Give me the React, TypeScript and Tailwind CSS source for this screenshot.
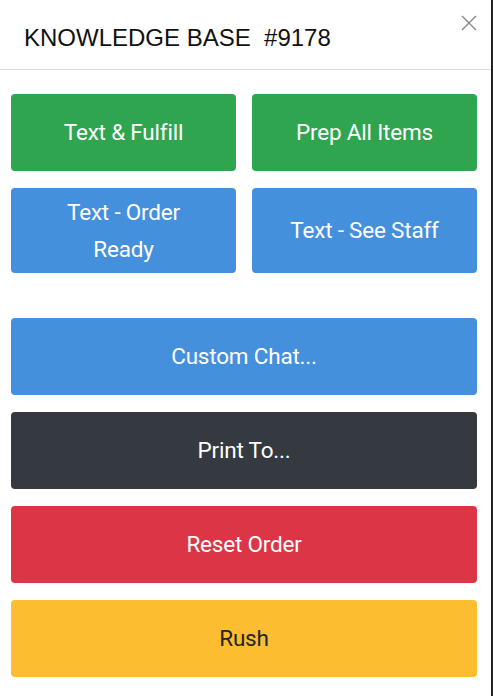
import React from 'react'

type Btn = { label: string; className: string }

const PAIRS: Btn[][] = [
  [
    { label: 'Text & Fulfill', className: 'bg-[#2fa54f] text-white' },
    { label: 'Prep All Items', className: 'bg-[#2fa54f] text-white' },
  ],
  [
    { label: 'Text - Order Ready', className: 'bg-[#4590dd] text-white' },
    { label: 'Text - See Staff', className: 'bg-[#4590dd] text-white' },
  ],
]

const WIDE: Btn[] = [
  { label: 'Print To...', className: 'bg-[#343a40] text-white' },
  { label: 'Reset Order', className: 'bg-[#dc3545] text-white' },
  { label: 'Rush', className: 'bg-[#fcbd30] text-[#212529]' },
]

function ActionButton({ label, className }: Btn) {
  return (
    <button
      className={`flex min-h-[77px] w-full items-center justify-center rounded-[4px] px-7 py-[5.5px] text-center text-[22.5px] leading-[37px] tracking-[-0.2px] ${className}`}
    >
      {label}
    </button>
  )
}

export default function App() {
  return (
    <div
      className="h-[696px] w-[493px] border-r-2 border-[#222] bg-white"
      style={{ fontFamily: 'Roboto, "Noto Sans", sans-serif' }}
    >
      <div className="relative flex h-[70px] items-center border-b border-[#dedede] pl-6">
        <h1
          className="pt-[6px] text-[24px] text-[#111]"
          style={{ fontFamily: '"Liberation Sans", Arial, sans-serif' }}
        >
          KNOWLEDGE BASE&nbsp;&nbsp;#9178
        </h1>
        <button className="absolute right-[14px] top-[15px] h-4 w-4 text-[#888]" aria-label="Close">
          <svg viewBox="0 0 16 16" className="h-full w-full" fill="none" stroke="currentColor" strokeWidth="1.4">
            <path d="M1 1L15 15M15 1L1 15" />
          </svg>
        </button>
      </div>

      <div className="flex flex-col pl-[11px] pr-[14px] pt-6">
        <div className="flex flex-col gap-[17px]">
          {PAIRS.map((row, i) => (
            <div key={i} className="grid grid-cols-2 gap-4">
              {row.map((b) => (
                <ActionButton key={b.label} {...b} />
              ))}
            </div>
          ))}
        </div>

        <div className="mt-[45px] flex flex-col gap-[17px]">
          <ActionButton label="Custom Chat..." className="bg-[#4590dd] text-white" />
          {WIDE.map((b) => (
            <ActionButton key={b.label} {...b} />
          ))}
        </div>
      </div>
    </div>
  )
}
